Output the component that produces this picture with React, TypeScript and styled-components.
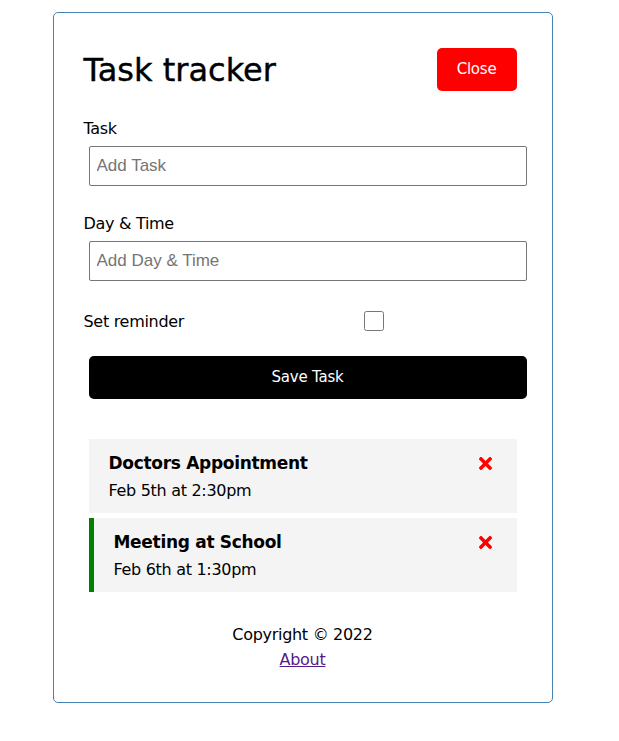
import { useState } from "react";
import styled, { createGlobalStyle } from "styled-components";
import { FaTimes } from "react-icons/fa";

const GlobalStyle = createGlobalStyle`
  * {
    box-sizing: border-box;
    margin: 0;
    padding: 0;
  }
  body {
    font-family: "DejaVu Sans", "Noto Sans", sans-serif;
    font-size: 16px;
    line-height: 25px;
    letter-spacing: -0.3px;
    background: #fff;
    color: #000;
  }
`;

const Page = styled.div`
  padding: 12px 14px 0 0;
`;

const Container = styled.div`
  max-width: 500px;
  margin: 0 auto;
  min-height: 300px;
  overflow: auto;
  border: 1px solid steelblue;
  border-radius: 5px;
  padding: 30px;
`;

const Header = styled.header`
  display: flex;
  justify-content: space-between;
  align-items: center;
  margin-bottom: 20px;
`;

const Title = styled.h1`
  font-size: 32px;
  line-height: 48px;
  font-weight: 400;
  letter-spacing: 0;
  -webkit-text-stroke: 0.4px #000;
`;

const Button = styled.button<{ $bg?: string; $block?: boolean }>`
  display: ${(p) => (p.$block ? "block" : "inline-block")};
  width: ${(p) => (p.$block ? "100%" : "auto")};
  background: ${(p) => p.$bg || "#000"};
  color: #fff;
  border: none;
  padding: 10px 20px;
  margin: 5px;
  border-radius: 5px;
  cursor: pointer;
  font-size: 15px;
  line-height: 23px;
  letter-spacing: -0.2px;
  font-family: inherit;
`;

const Form = styled.form`
  margin-bottom: 40px;
`;

const Field = styled.div`
  margin: 20px 0;

  label {
    display: block;
  }
`;

const TextInput = styled.input`
  width: 100%;
  height: 40px;
  margin: 5px;
  padding: 3px 7px;
  font-size: 17px;
  letter-spacing: 0;
  font-family: "Liberation Sans", Arial, sans-serif;
  border: 1px solid #767676;
  border-radius: 2px;

  &::placeholder {
    color: #757575;
  }
`;

const CheckField = styled(Field)`
  display: flex;
  align-items: center;
  justify-content: space-between;

  label {
    flex: 1;
  }
`;

const CheckInput = styled.input`
  flex: 2;
  height: 20px;
  margin: 5px;
`;

const TaskCard = styled.div<{ $reminder?: boolean }>`
  background: #f4f4f4;
  margin: 5px;
  padding: 10px 20px;
  cursor: pointer;
  border-left: ${(p) => (p.$reminder ? "5px solid green" : "none")};
`;

const TaskTitle = styled.h3`
  display: flex;
  align-items: center;
  justify-content: space-between;
  font-size: 17px;
  font-weight: 700;
  letter-spacing: -0.3px;
  line-height: 29px;

  svg {
    color: red;
    cursor: pointer;
    margin-right: 2px;
  }
`;

const Footer = styled.footer`
  margin-top: 30px;
  text-align: center;

  a {
    color: #551a8b;
  }
`;

const tasks = [
  { id: 1, text: "Doctors Appointment", day: "Feb 5th at 2:30pm", reminder: false },
  { id: 2, text: "Meeting at School", day: "Feb 6th at 1:30pm", reminder: true },
];

export default function App() {
  const [reminder, setReminder] = useState(false);

  return (
    <>
      <GlobalStyle />
      <Page>
        <Container>
          <Header>
            <Title>Task tracker</Title>
            <Button $bg="red" type="button">
              Close
            </Button>
          </Header>
          <Form onSubmit={(e) => e.preventDefault()}>
            <Field>
              <label>Task</label>
              <TextInput type="text" placeholder="Add Task" />
            </Field>
            <Field>
              <label>Day &amp; Time</label>
              <TextInput type="text" placeholder="Add Day & Time" />
            </Field>
            <CheckField>
              <label>Set reminder</label>
              <CheckInput
                type="checkbox"
                checked={reminder}
                onChange={(e) => setReminder(e.target.checked)}
              />
            </CheckField>
            <Button $block type="submit">
              Save Task
            </Button>
          </Form>
          {tasks.map((task) => (
            <TaskCard key={task.id} $reminder={task.reminder}>
              <TaskTitle>
                {task.text}
                <FaTimes size={19} />
              </TaskTitle>
              <p>{task.day}</p>
            </TaskCard>
          ))}
          <Footer>
            <p>Copyright &copy; 2022</p>
            <a href="#about">About</a>
          </Footer>
        </Container>
      </Page>
    </>
  );
}
